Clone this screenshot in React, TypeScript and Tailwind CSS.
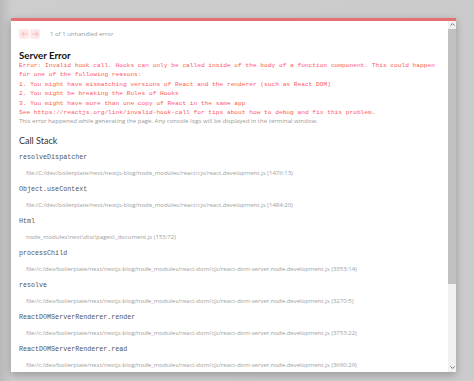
import { ChevronDown, ChevronUp } from "lucide-react";

const errorLines = [
  "Error: Invalid hook call. Hooks can only be called inside of the body of a function component. This could happen",
  "for one of the following reasons:",
  "1. You might have mismatching versions of React and the renderer (such as React DOM)",
  "2. You might be breaking the Rules of Hooks",
  "3. You might have more than one copy of React in the same app",
  "See https://reactjs.org/link/invalid-hook-call for tips about how to debug and fix this problem.",
];

const frames = [
  {
    name: "resolveDispatcher",
    file: "file:/C:/dev/boilerplate/next/nextjs-blog/node_modules/react/cjs/react.development.js (1476:13)",
  },
  {
    name: "Object.useContext",
    file: "file:/C:/dev/boilerplate/next/nextjs-blog/node_modules/react/cjs/react.development.js (1484:20)",
  },
  {
    name: "Html",
    file: "node_modules\\next\\dist\\pages\\_document.js (153:72)",
  },
  {
    name: "processChild",
    file: "file:/c:/dev/boilerplate/next/nextjs-blog/node_modules/react-dom/cjs/react-dom-server.node.development.js (3353:14)",
  },
  {
    name: "resolve",
    file: "file:/c:/dev/boilerplate/next/nextjs-blog/node_modules/react-dom/cjs/react-dom-server.node.development.js (3270:5)",
  },
  {
    name: "ReactDOMServerRenderer.render",
    file: "file:/c:/dev/boilerplate/next/nextjs-blog/node_modules/react-dom/cjs/react-dom-server.node.development.js (3753:22)",
  },
  {
    name: "ReactDOMServerRenderer.read",
    file: "file:/c:/dev/boilerplate/next/nextjs-blog/node_modules/react-dom/cjs/react-dom-server.node.development.js (3690:29)",
  },
];

function NavButton({ dir }: { dir: "left" | "right" }) {
  return (
    <span className="flex h-[10px] w-[10px] items-center justify-center rounded-[2px] bg-[#fde9e9]">
      <svg width="7" height="6" viewBox="0 0 7 6" fill="none" stroke="#f6b3b3" strokeWidth="0.9">
        {dir === "left" ? (
          <path d="M6.5 3H0.8M3.3 0.6L0.8 3l2.5 2.4" />
        ) : (
          <path d="M0.5 3h5.7M3.7 0.6L6.2 3 3.7 5.4" />
        )}
      </svg>
    </span>
  );
}

export default function App() {
  return (
    <div className="h-[381px] w-[474px] overflow-hidden bg-[linear-gradient(90deg,#b9b9b9_0px,#cdcdcd_12px,#cbcbcb_100%)] pl-[11px] pt-[18px] font-['Open_Sans',sans-serif]">
      <div className="flex h-[354px] w-[445px] border-t-[3px] border-[#e57070] bg-white shadow-[0_3px_8px_rgba(0,0,0,0.25)]">
        {/* Content */}
        <div className="flex-1 overflow-hidden whitespace-nowrap px-2 pt-2">
          {/* Nav */}
          <div className="flex h-[10px] items-center">
            <div className="flex gap-px">
              <NavButton dir="left" />
              <NavButton dir="right" />
            </div>
            <span className="ml-[10px] text-[6px] leading-[10px] text-[#999]">1 of 1 unhandled error</span>
          </div>

          <h1 className="mt-[10px] font-['Lato',sans-serif] text-[9.7px] font-bold leading-[12px] text-[#111]">
            Server Error
          </h1>

          <div className="font-['Liberation_Mono',monospace] text-[6.2px] leading-[9.4px] text-[#ff5a5a]">
            {errorLines.map((l) => (
              <div key={l}>{l}</div>
            ))}
          </div>
          <p className="text-[6.07px] leading-[9.6px] text-[#9a9a9a]">
            This error happened while generating the page. Any console logs will be displayed in the terminal window.
          </p>

          <h2 className="mt-[6px] font-['Lato',sans-serif] text-[9px] leading-[16px] text-[#333]">Call Stack</h2>

          {frames.map((f) => (
            <div key={f.name}>
              <div className="font-['Liberation_Mono',monospace] text-[6.7px] leading-[16px] text-[#555]">{f.name}</div>
              <div className="pl-[7px] text-[6px] leading-[16px] text-[#a0a0a0]">{f.file}</div>
            </div>
          ))}
        </div>

        {/* Scrollbar */}
        <div className="flex w-2 flex-col bg-[#f1f1f1]">
          <ChevronUp size={7} strokeWidth={3} className="mx-auto text-[#666]" />
          <div className="mt-px h-[255px] bg-[#c1c1c1]" />
          <div className="flex-1" />
          <ChevronDown size={7} strokeWidth={3} className="mx-auto mb-px text-[#666]" />
        </div>
      </div>
    </div>
  );
}
